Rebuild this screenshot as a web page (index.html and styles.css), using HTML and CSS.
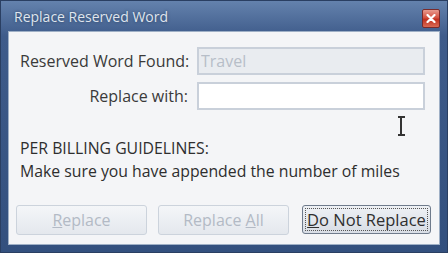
FILE: index.html
```html
<!DOCTYPE html>
<html lang="en">
<head>
    <meta charset="UTF-8">
    <title>Replace Reserved Word</title>
    <link rel="stylesheet" href="styles.css">
</head>
<body>
    <div class="window">
        <div class="title-bar">
            <span class="title">Replace Reserved Word</span>
            <button class="close-btn" aria-label="Close">
                <svg width="10" height="9" viewBox="0 0 10 9">
                    <path d="M1.5 1 L8.5 8 M8.5 1 L1.5 8" stroke="#fff" stroke-width="2.2" stroke-linecap="round"/>
                </svg>
            </button>
        </div>

        <div class="client">
            <div class="form-row">
                <label class="field-label">Reserved Word Found:</label>
                <input type="text" class="field field-disabled" value="Travel" disabled>
            </div>
            <div class="form-row">
                <label class="field-label">Replace with:</label>
                <input type="text" class="field">
            </div>

            <div class="cursor-row">
                <span class="ibeam"></span>
            </div>

            <div class="notice">
                <p>PER BILLING GUIDELINES:</p>
                <p>Make sure you have appended the number of miles</p>
            </div>

            <div class="button-row">
                <button class="btn" disabled><u>R</u>eplace</button>
                <button class="btn" disabled>Replace <u>A</u>ll</button>
                <button class="btn btn-focus"><span class="focus-rect"><u>D</u>o Not Replace</span></button>
            </div>
        </div>
    </div>
</body>
</html>
```

FILE: styles.css
```css
html, body {
    margin: 0;
    padding: 0;
    width: 448px;
    height: 253px;
    overflow: hidden;
    background: #3f5d8c;
}

.window {
    width: 448px;
    height: 253px;
    box-sizing: border-box;
    display: flex;
    flex-direction: column;
    padding: 0 7px 7px 7px;
    background: linear-gradient(to bottom, #6482ad 0%, #3e5b8a 14%, #33507e 100%);
    border: 1px solid #2a3f62;
    font-family: "Open Sans", "Noto Sans", sans-serif;
}

.title-bar {
    height: 30px;
    display: flex;
    align-items: center;
    justify-content: space-between;
    flex-shrink: 0;
}

.title {
    color: #dfe5ee;
    font-size: 14px;
    margin-left: 6px;
    margin-top: 1px;
    text-shadow: 0 0 3px rgba(20, 35, 60, 0.6);
}

.close-btn {
    width: 18px;
    height: 19px;
    margin-right: 0;
    margin-top: 4px;
    padding: 0;
    border: 1px solid #7a2a2a;
    border-radius: 2px;
    background: linear-gradient(to bottom, #e89a8e 0%, #d5513f 45%, #c2301f 55%, #d96a55 100%);
    display: flex;
    align-items: center;
    justify-content: center;
}

.client {
    flex: 1;
    background: #f4f5f7;
    border: 1px solid #9fb0c6;
    padding: 15px 5px 0 11px;
    display: flex;
    flex-direction: column;
}

.form-row {
    display: flex;
    align-items: center;
    margin-bottom: 7px;
}

.field-label {
    width: 177px;
    box-sizing: border-box;
    text-align: right;
    padding-right: 9px;
    font-size: 16px;
    color: #3a3a3a;
    white-space: nowrap;
}

.field {
    width: 228px;
    height: 28px;
    box-sizing: border-box;
    border: 2px solid #c9d0da;
    background: #fff;
    padding: 0 2px;
    font-family: inherit;
    font-size: 16px;
    color: #333;
}

.field-disabled {
    background: #e9ecf0;
    color: #b7bec8;
}

.cursor-row {
    height: 20px;
    display: flex;
    justify-content: flex-end;
    padding-right: 29px;
}

.ibeam {
    width: 7px;
    height: 20px;
    margin-top: -1px;
    border-top: 2px solid #333;
    border-bottom: 2px solid #333;
    box-sizing: border-box;
    position: relative;
}

.ibeam::after {
    content: "";
    position: absolute;
    left: 2px;
    top: 0;
    bottom: 0;
    width: 2px;
    background: #333;
}

.notice {
    color: #2e2e2e;
    font-size: 15.8px;
}

.notice p {
    margin: 0;
    line-height: 23px;
    white-space: nowrap;
}

.button-row {
    display: flex;
    gap: 11px;
    margin-top: 22px;
    margin-left: -4px;
}

.btn {
    flex-shrink: 0;
    width: 131px;
    height: 30px;
    border: 1px solid #ccd3dc;
    border-radius: 3px;
    background: linear-gradient(to bottom, #f4f6f8 0%, #eceff3 50%, #e4e8ed 100%);
    color: #b3bac5;
    font-family: inherit;
    font-size: 16px;
    padding: 0;
    white-space: nowrap;
}

.btn-focus {
    width: 129px;
    height: 29px;
    margin-left: 2px;
    border: 1px solid #6f7b8c;
    background: linear-gradient(to bottom, #eef1f5 0%, #e3e7ed 50%, #d8dde5 100%);
    color: #2f2f2f;
    font-size: 16.5px;
    padding: 2px;
}

.focus-rect {
    display: flex;
    align-items: center;
    justify-content: center;
    height: 100%;
    border: 1px dotted #555;
    box-sizing: border-box;
}
```
